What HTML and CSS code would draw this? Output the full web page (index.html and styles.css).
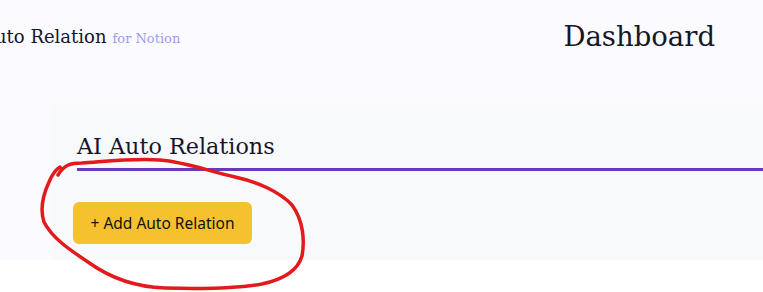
FILE: index.html
```html
<!DOCTYPE html>
<html>
<head>
<meta charset="utf-8">
<link rel="stylesheet" href="styles.css">
</head>
<body>
<div class="app">
  <header class="topbar">
    <div class="brand"><span class="brand-name">Auto Relation</span><span class="brand-sub">for Notion</span></div>
    <h1 class="page-title">Dashboard</h1>
  </header>
  <section class="card">
    <h2 class="card-title">AI Auto Relations</h2>
    <div class="actions">
      <button class="btn-add">+ Add Auto Relation</button>
    </div>
  </section>
</div>
<svg class="annotation" width="763" height="292" viewBox="0 0 763 292">
  <path d="M58 175 C64 165 70 163 82 163 C110 161 135 158 160 160 C185 162 205 170 235 177 C258 182 280 192 292 205 C303 220 305 240 302 256 C298 270 285 279 262 284 C235 289 200 289 165 288 C135 287 110 278 88 262 C70 250 52 238 44 222 C40 210 43 195 49 182 C52 175 55 170 60 167" fill="none" stroke="#e3191c" stroke-width="3.5" stroke-linecap="round" stroke-linejoin="round"/>
</svg>
</body>
</html>
```

FILE: styles.css
```css
html, body {
  margin: 0;
  padding: 0;
  background: #ffffff;
}
body {
  width: 763px;
  height: 292px;
  overflow: hidden;
  position: relative;
  font-family: "DejaVu Serif", "Liberation Serif", serif;
  color: #16162a;
}
.app {
  background: #fafaff;
  height: 260px;
  display: flex;
  flex-direction: column;
}
.topbar {
  height: 103px;
  display: flex;
  align-items: flex-start;
  justify-content: space-between;
  padding-right: 48px;
  box-sizing: border-box;
}
.brand {
  margin-left: -18px;
  margin-top: 26px;
  display: flex;
  align-items: baseline;
  gap: 6px;
  white-space: nowrap;
}
.brand-name {
  font-size: 18px;
  color: #16162a;
}
.brand-sub {
  font-size: 13px;
  color: #9d9bf2;
}
.page-title {
  margin: 20px 0 0 0;
  font-size: 27.5px;
  font-weight: normal;
  color: #16162a;
}
.card {
  margin-left: 52px;
  flex: 1;
  background: #f8f9fb;
  padding: 0 0 0 25px;
  display: flex;
  flex-direction: column;
}
.card-title {
  margin: 27px 0 0 0;
  font-size: 22.3px;
  font-weight: normal;
  line-height: 32px;
  padding-bottom: 6px;
  border-bottom: 3.5px solid #673ab7;
  color: #16162a;
}
.actions {
  padding-top: 31px;
  margin-left: -4px;
}
.btn-add {
  background: #f6c12f;
  border: none;
  border-radius: 6px;
  width: 179px;
  height: 42px;
  font-family: "Noto Sans", "Open Sans", sans-serif;
  font-size: 15.5px;
  color: #111111;
  padding: 0;
}
.annotation {
  position: absolute;
  left: 0;
  top: 0;
  pointer-events: none;
}
```
